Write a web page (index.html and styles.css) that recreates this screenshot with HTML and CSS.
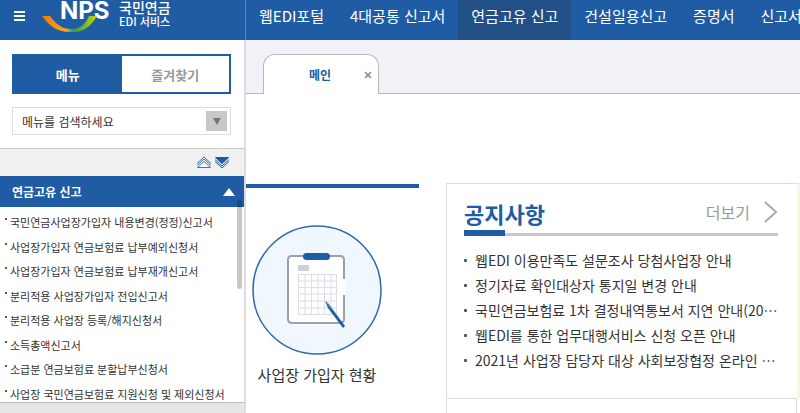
FILE: index.html
```html
<!DOCTYPE html>
<html lang="ko">
<head>
  <meta charset="UTF-8">
  <meta name="viewport" content="width=device-width, initial-scale=1">
  <title>국민연금 EDI 서비스</title>
  <link rel="stylesheet" href="styles.css">
</head>
<body>
  <aside class="sidebar">
    <div class="brand">
      <button class="menu-toggle" type="button" aria-label="메뉴 열기">
        <svg width="11" height="10" viewBox="0 0 11 10">
          <path d="M0 1h11M0 5h11M0 9h11" stroke="#fff" stroke-width="2"/>
        </svg>
      </button>
      <a class="logo" href="#">
        <svg class="logo-mark" width="76" height="40" viewBox="0 0 76 40" aria-label="NPS">
          <defs>
            <linearGradient id="swoosh" x1="0" x2="1">
              <stop offset="0" stop-color="#f07c00"/>
              <stop offset="0.45" stop-color="#f5a81c"/>
              <stop offset="0.56" stop-color="#2f9e41"/>
              <stop offset="0.75" stop-color="#6fb52c"/>
              <stop offset="1" stop-color="#c8d400"/>
            </linearGradient>
          </defs>
          <text class="logo-nps" x="18" y="19">NPS</text>
          <path d="M0 16H8C14 24 21 30 30 29C39 29 44 23 47 16H55C49 26 42 32 31 32C17 33 8 27 0 16Z" fill="url(#swoosh)"/>
        </svg>
        <span class="logo-text">
          <span>국민연금</span>
          <span class="logo-sub">EDI 서비스</span>
        </span>
      </a>
    </div>

    <div class="side-search">
      <div class="side-tabs">
        <button class="side-tab active" type="button">메뉴</button>
        <button class="side-tab" type="button">즐겨찾기</button>
      </div>
      <form class="search">
        <input class="search-input" type="text" placeholder="메뉴를 검색하세요" aria-label="메뉴 검색">
        <button class="search-button" type="button" aria-label="목록 열기">
          <svg width="8" height="8" viewBox="0 0 8 8"><path d="M0 1h8L4 8z" fill="#777"/></svg>
        </button>
      </form>
    </div>

    <div class="fold">
      <button class="icon-button" type="button" aria-label="모두 접기">
        <svg width="16" height="13" viewBox="0 0 16 13" fill="none" stroke="#3b72b3">
          <path d="M1 7.500L8 1l7 6.500"/>
          <path d="M1.500 11.500L8 5.500l6.500 6z" fill="#fff"/>
          <path d="M1 9.500L8 3l7 6.500"/>
        </svg>
      </button>
      <button class="icon-button" type="button" aria-label="모두 펼치기">
        <svg width="16" height="13" viewBox="0 0 16 13" fill="none" stroke="#205ca4">
          <path d="M1.500 1.500h13L8 7.500z" fill="#205ca4"/>
          <path d="M1 3.500L8 10l7-6.500M1 5.500L8 12l7-6.500"/>
        </svg>
      </button>
    </div>

    <button class="group-title" type="button">
      연금고유 신고
      <svg width="12" height="8" viewBox="0 0 12 8"><path d="M0 8L6 0l6 8z" fill="#fff"/></svg>
    </button>
    <div class="group">
      <ul class="group-list">
        <li><a href="#">국민연금사업장가입자 내용변경(정정)신고서</a></li>
        <li><a href="#">사업장가입자 연금보험료 납부예외신청서</a></li>
        <li><a href="#">사업장가입자 연금보험료 납부재개신고서</a></li>
        <li><a href="#">분리적용 사업장가입자 전입신고서</a></li>
        <li><a href="#">분리적용 사업장 등록/해지신청서</a></li>
        <li><a href="#">소득총액신고서</a></li>
        <li><a href="#">소급분 연금보험료 분할납부신청서</a></li>
        <li><a href="#">사업장 국민연금보험료 지원신청 및 제외신청서</a></li>
      </ul>
      <span class="scroll-thumb"></span>
    </div>
    <div class="side-footer"></div>
  </aside>

  <div class="page">
    <nav class="top-nav">
      <a href="#">웹EDI포털</a>
      <a href="#">4대공통 신고서</a>
      <a class="active" href="#">연금고유 신고</a>
      <a href="#">건설일용신고</a>
      <a href="#">증명서</a>
      <a href="#">신고서</a>
    </nav>

    <div class="tab-bar">
      <div class="tab">
        <a class="tab-name" href="#">메인</a>
        <button class="tab-close" type="button" aria-label="닫기">
          <svg width="8" height="8" viewBox="0 0 8 8"><path d="M1 1l6 6M7 1L1 7" stroke="#888" stroke-width="1.500"/></svg>
        </button>
      </div>
    </div>

    <main class="content">
      <a class="status-card" href="#">
        <svg width="130" height="130" viewBox="0 0 130 130">
          <circle cx="65" cy="65" r="64" fill="#f0f7ff" stroke="#2f69b0" stroke-width="1.500"/>
          <path d="M36 32h56v68H36z" fill="#fff"/>
          <path d="M92 54V35q0-4-4-4H40q-4 0-4 4v59q0 4 4 4h48q4 0 4-4V70" fill="none" stroke="#9b9fb0" stroke-width="2"/>
          <path d="M90 54h4v16h-4z" fill="#fff"/>
          <rect x="51" y="28" width="27" height="7" rx="3.500" fill="#205ca4"/>
          <path d="M46 40h11v6H46z" fill="#cdd1df"/>
          <path d="M46.500 49.500h38v40h-38zM53 49v41M59.500 49v41M66 49v41M72.500 49v41M79 49v41M46 56h38M46 62.500h38M46 69h38M46 76h38M46 83h38" fill="none" stroke="#dcdde7"/>
          <path d="M73 76l3 2 17 23-2 2-15-20z" fill="#205ca4"/>
          <path d="M75 78l5 7" stroke="#a9c5e6" stroke-dasharray="1 1"/>
        </svg>
        <span class="status-name">사업장 가입자 현황</span>
      </a>

      <div class="boards">
        <section class="notice">
          <header class="notice-head">
            <h2>공지사항</h2>
            <a class="more" href="#">
              더보기
              <svg width="14" height="22" viewBox="0 0 14 22"><path d="M1 1l11 10L1 21" fill="none" stroke="#aaa" stroke-width="2"/></svg>
            </a>
          </header>
          <ul class="notice-list">
            <li><a href="#">웹EDI 이용만족도 설문조사 당첨사업장 안내</a></li>
            <li><a href="#">정기자료 확인대상자 통지일 변경 안내</a></li>
            <li><a href="#">국민연금보험료 1차 결정내역통보서 지연 안내(20⋯</a></li>
            <li><a href="#">웹EDI를 통한 업무대행서비스 신청 오픈 안내</a></li>
            <li><a href="#">2021년 사업장 담당자 대상 사회보장협정 온라인 ⋯</a></li>
          </ul>
        </section>
        <section class="next-board"></section>
      </div>
    </main>
  </div>
</body>
</html>
```

FILE: styles.css
```css
:root {
  --blue: #205ca4;
  --blue-dark: #214f86;
  --line: #dcdcdc;
  --text: #333;
}
* {
  box-sizing: border-box;
}
body {
  margin: 0;
  height: 100vh;
  display: flex;
  overflow: hidden;
  background: #fff;
  color: var(--text);
  font-family: "Noto Sans CJK KR", "Noto Sans", sans-serif;
}
a {
  color: inherit;
  text-decoration: none;
}
ul {
  list-style: none;
  margin: 0;
  padding: 0;
}
button {
  border: 0;
  padding: 0;
  background: none;
  font-family: inherit;
  cursor: pointer;
}
svg {
  display: block;
}

/* sidebar */
.sidebar {
  width: 246px;
  flex-shrink: 0;
  display: flex;
  flex-direction: column;
  border-right: 2px solid var(--line);
}
.brand {
  height: 40px;
  flex-shrink: 0;
  display: flex;
  align-items: flex-start;
  gap: 17px;
  margin-right: -2px;
  padding-left: 14px;
  background: var(--blue);
  border-right: 1px solid #5c88bd;
}
.menu-toggle {
  margin-top: 11px;
}
.logo {
  display: flex;
  gap: 1px;
  color: #fff;
}
.logo-nps {
  font-family: Inter, "Noto Sans", sans-serif;
  font-size: 24px;
  font-weight: 700;
  fill: #fff;
}
.logo-text {
  display: flex;
  flex-direction: column;
  font-size: 14px;
  font-weight: 500;
  line-height: 15px;
}
.logo-sub {
  font-size: 11px;
  line-height: 12px;
}
.side-search {
  flex-shrink: 0;
  padding: 14px 13px 13px 12px;
}
.side-tabs {
  display: flex;
  height: 40px;
  border: 2px solid var(--blue);
}
.side-tab {
  flex: 1;
  font-size: 13px;
  font-weight: 700;
  color: #999;
}
.side-tab.active {
  background: var(--blue);
  color: #fff;
}
.search {
  display: flex;
  align-items: center;
  height: 28px;
  margin-top: 13px;
  padding: 0 3px 0 9px;
  border: 1px solid #ddd;
}
.search-input {
  flex: 1;
  min-width: 0;
  border: 0;
  padding: 0;
  outline: none;
  font-family: inherit;
  font-size: 12px;
}
.search-input::placeholder {
  color: var(--text);
}
.search-button {
  display: grid;
  place-items: center;
  width: 21px;
  height: 20px;
  background: #c8c8c8;
}
.fold {
  height: 28px;
  flex-shrink: 0;
  display: flex;
  justify-content: flex-end;
  align-items: center;
  gap: 2px;
  padding-right: 14px;
  background: #f0f0f0;
  border-top: 1px solid #c8c8c8;
}
.group-title {
  height: 31px;
  flex-shrink: 0;
  display: flex;
  justify-content: space-between;
  align-items: center;
  padding: 0 9px 0 12px;
  background: var(--blue);
  color: #fff;
  font-size: 12px;
  font-weight: 700;
}
.group {
  flex: 1;
  min-height: 0;
  position: relative;
}
.group-list {
  height: 100%;
  display: flex;
  flex-direction: column;
  justify-content: space-between;
  padding: 7px 12px 0 5px;
  font-size: 11px;
  line-height: 16px;
  white-space: nowrap;
}
.group-list li {
  display: flex;
  gap: 3px;
}
.group-list li::before {
  content: "";
  width: 2px;
  height: 2px;
  margin-top: 4px;
  background: #555;
}
.scroll-thumb {
  position: absolute;
  top: -7px;
  right: 2px;
  width: 5px;
  height: 89px;
  border-radius: 3px;
  background: rgba(0, 0, 0, 0.22);
}
.side-footer {
  height: 11px;
  flex-shrink: 0;
  background: #e6e6e6;
  border-top: 1px solid #bbb;
}

/* page */
.page {
  flex: 1;
  min-width: 0;
  display: flex;
  flex-direction: column;
}
.top-nav {
  height: 40px;
  flex-shrink: 0;
  display: flex;
  overflow: hidden;
  background: var(--blue);
  color: #fff;
  font-size: 15px;
  line-height: 32px;
  white-space: nowrap;
}
.top-nav a {
  flex-shrink: 0;
  padding: 0 13px;
}
.top-nav .active {
  background: var(--blue-dark);
}
.tab-bar {
  height: 54px;
  flex-shrink: 0;
  display: flex;
  align-items: flex-end;
  padding-left: 17px;
  background: #f1f2f7;
  border-bottom: 1px solid #b8b8b8;
}
.tab {
  width: 116px;
  height: 40px;
  margin-bottom: -1px;
  display: flex;
  align-items: center;
  padding-right: 6px;
  background: #fff;
  border: 1px solid #b8b8b8;
  border-bottom: 0;
  border-radius: 12px 12px 0 0;
}
.tab-name {
  flex: 1;
  padding-left: 12px;
  text-align: center;
  color: var(--blue);
  font-size: 12px;
  font-weight: 700;
}
.content {
  flex: 1;
  display: flex;
  gap: 27px;
  padding-top: 89px;
}
.status-card {
  width: 173px;
  flex-shrink: 0;
  display: flex;
  flex-direction: column;
  align-items: center;
  margin-top: 1px;
  padding: 37px 31px 0 0;
  border-top: 4px solid var(--blue);
}
.status-name {
  margin-top: 8px;
  font-size: 15px;
  line-height: 24px;
  white-space: nowrap;
}

/* notice board */
.boards {
  flex: 1;
  min-width: 0;
  display: flex;
  flex-direction: column;
}
.notice {
  height: 215px;
  flex-shrink: 0;
  padding: 12px 19px 0 17px;
  border: 1px solid var(--line);
  border-width: 1px 0 0 1px;
  border-right: 3px solid #edfce0;
}
.notice-head {
  height: 40px;
  display: flex;
  justify-content: space-between;
  align-items: flex-start;
  border-bottom: 3px solid #c8c8c8;
}
.notice-head h2 {
  height: 40px;
  margin: 0;
  font-size: 22px;
  line-height: 34px;
  color: var(--blue);
}
.notice-head h2::after {
  content: "";
  display: block;
  width: 41px;
  height: 6px;
  background: var(--blue);
}
.more {
  display: flex;
  align-items: center;
  gap: 14px;
  font-size: 16px;
  line-height: 32px;
  color: #999;
}
.notice-list {
  padding-top: 12px;
  font-size: 14px;
  line-height: 25px;
  white-space: nowrap;
}
.notice-list li {
  display: flex;
  align-items: center;
  gap: 8px;
}
.notice-list li::before {
  content: "";
  width: 3px;
  height: 3px;
  border-radius: 1px;
  background: #555;
}
.next-board {
  flex: 1;
  margin-right: 3px;
  border: 1px solid var(--line);
  border-bottom: 0;
}
```
